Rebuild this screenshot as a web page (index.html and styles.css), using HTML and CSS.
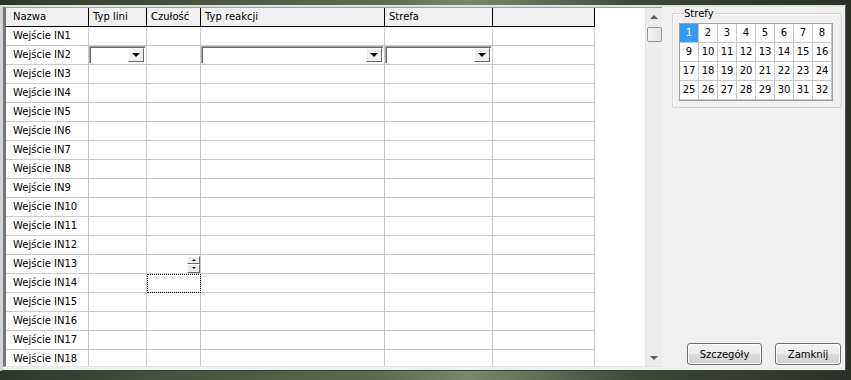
FILE: index.html
```html
<!DOCTYPE html>
<html lang="pl">

<head>
    <meta charset="UTF-8">
    <meta name="viewport" content="width=device-width, initial-scale=1.0">
    <title>Wejścia</title>
    <link rel="stylesheet" href="styles.css">
</head>

<body>
    <div class="window">
        <div class="grid-wrap">
            <div class="table-area">
                <div class="row head">
                    <div class="cell name">Nazwa</div>
                    <div class="cell">Typ lini</div>
                    <div class="cell">Czułość</div>
                    <div class="cell">Typ reakcji</div>
                    <div class="cell">Strefa</div>
                    <div class="cell"></div>
                </div>
                <div class="row"><div class="cell name">Wejście IN1</div><div class="cell"></div><div class="cell"></div><div class="cell"></div><div class="cell"></div><div class="cell"></div></div>
                <div class="row">
                    <div class="cell name">Wejście IN2</div>
                    <div class="cell edit"><div class="combo"><span class="combo-btn"><i class="tri-down"></i></span></div></div>
                    <div class="cell"></div>
                    <div class="cell edit"><div class="combo"><span class="combo-btn"><i class="tri-down"></i></span></div></div>
                    <div class="cell edit"><div class="combo"><span class="combo-btn"><i class="tri-down"></i></span></div></div>
                    <div class="cell"></div>
                </div>
                <div class="row"><div class="cell name">Wejście IN3</div><div class="cell"></div><div class="cell"></div><div class="cell"></div><div class="cell"></div><div class="cell"></div></div>
                <div class="row"><div class="cell name">Wejście IN4</div><div class="cell"></div><div class="cell"></div><div class="cell"></div><div class="cell"></div><div class="cell"></div></div>
                <div class="row"><div class="cell name">Wejście IN5</div><div class="cell"></div><div class="cell"></div><div class="cell"></div><div class="cell"></div><div class="cell"></div></div>
                <div class="row"><div class="cell name">Wejście IN6</div><div class="cell"></div><div class="cell"></div><div class="cell"></div><div class="cell"></div><div class="cell"></div></div>
                <div class="row"><div class="cell name">Wejście IN7</div><div class="cell"></div><div class="cell"></div><div class="cell"></div><div class="cell"></div><div class="cell"></div></div>
                <div class="row"><div class="cell name">Wejście IN8</div><div class="cell"></div><div class="cell"></div><div class="cell"></div><div class="cell"></div><div class="cell"></div></div>
                <div class="row"><div class="cell name">Wejście IN9</div><div class="cell"></div><div class="cell"></div><div class="cell"></div><div class="cell"></div><div class="cell"></div></div>
                <div class="row"><div class="cell name">Wejście IN10</div><div class="cell"></div><div class="cell"></div><div class="cell"></div><div class="cell"></div><div class="cell"></div></div>
                <div class="row"><div class="cell name">Wejście IN11</div><div class="cell"></div><div class="cell"></div><div class="cell"></div><div class="cell"></div><div class="cell"></div></div>
                <div class="row"><div class="cell name">Wejście IN12</div><div class="cell"></div><div class="cell"></div><div class="cell"></div><div class="cell"></div><div class="cell"></div></div>
                <div class="row">
                    <div class="cell name">Wejście IN13</div>
                    <div class="cell"></div>
                    <div class="cell spin-cell"><div class="spin"><span class="spin-btn"><i class="tri-up small"></i></span><span class="spin-btn"><i class="tri-down small"></i></span></div></div>
                    <div class="cell"></div><div class="cell"></div><div class="cell"></div>
                </div>
                <div class="row"><div class="cell name">Wejście IN14</div><div class="cell"></div><div class="cell focus"></div><div class="cell"></div><div class="cell"></div><div class="cell"></div></div>
                <div class="row"><div class="cell name">Wejście IN15</div><div class="cell"></div><div class="cell"></div><div class="cell"></div><div class="cell"></div><div class="cell"></div></div>
                <div class="row"><div class="cell name">Wejście IN16</div><div class="cell"></div><div class="cell"></div><div class="cell"></div><div class="cell"></div><div class="cell"></div></div>
                <div class="row"><div class="cell name">Wejście IN17</div><div class="cell"></div><div class="cell"></div><div class="cell"></div><div class="cell"></div><div class="cell"></div></div>
                <div class="row"><div class="cell name">Wejście IN18</div><div class="cell"></div><div class="cell"></div><div class="cell"></div><div class="cell"></div><div class="cell"></div></div>
            </div>
            <div class="vscroll">
                <span class="sb-btn"><i class="tri-up gray"></i></span>
                <span class="thumb"></span>
                <span class="sb-btn bottom"><i class="tri-down gray"></i></span>
            </div>
        </div>

        <aside class="side">
            <div class="group">
                <div class="group-title">Strefy</div>
                <div class="zones">
                    <span class="zone selected">1</span><span class="zone">2</span><span class="zone">3</span><span class="zone">4</span><span class="zone">5</span><span class="zone">6</span><span class="zone">7</span><span class="zone">8</span>
                    <span class="zone">9</span><span class="zone">10</span><span class="zone">11</span><span class="zone">12</span><span class="zone">13</span><span class="zone">14</span><span class="zone">15</span><span class="zone">16</span>
                    <span class="zone">17</span><span class="zone">18</span><span class="zone">19</span><span class="zone">20</span><span class="zone">21</span><span class="zone">22</span><span class="zone">23</span><span class="zone">24</span>
                    <span class="zone">25</span><span class="zone">26</span><span class="zone">27</span><span class="zone">28</span><span class="zone">29</span><span class="zone">30</span><span class="zone">31</span><span class="zone">32</span>
                </div>
            </div>
            <div class="actions">
                <button class="btn btn-details">Szczegóły</button>
                <button class="btn btn-close">Zamknij</button>
            </div>
        </aside>
    </div>
</body>

</html>
```

FILE: styles.css
```css
body {
    margin: 0;
    width: 851px;
    height: 380px;
    overflow: hidden;
    background: linear-gradient(90deg, #2c352a 0%, #46523f 20%, #5d6b53 45%, #7a8870 55%, #3d4838 75%, #2a3027 100%);
    font-family: "DejaVu Sans", sans-serif;
    font-size: 10px;
    color: #000;
}

.window {
    margin-top: 5px;
    width: 846px;
    height: 366px;
    box-sizing: border-box;
    border-top: 2px solid #dfe2de;
    border-left: 3px solid #d3d6d9;
    border-right: 1px solid #4f574c;
    border-bottom: 1px solid #3a4137;
    background: #f0f0f0;
    display: flex;
}

/* grid with inputs */
.grid-wrap {
    width: 659px;
    height: 360px;
    box-sizing: border-box;
    border-top: 1px solid #a0a0a0;
    border-left: 3px solid #777;
    border-bottom: 1px solid #e3e3e3;
    display: flex;
}

.table-area {
    width: 639px;
    height: 358px;
    background: #fff;
    overflow: hidden;
}

.row {
    display: grid;
    grid-template-columns: 83px 58px 54px 184px 108px 102px;
    height: 19px;
}

.cell {
    box-sizing: border-box;
    border-right: 1px solid #cacaca;
    border-bottom: 1px solid #cacaca;
    padding-left: 4px;
    line-height: 18px;
    white-space: nowrap;
    overflow: hidden;
}

.cell.name {
    padding-left: 7px;
}

.head .cell {
    background: #f0f0f0;
    border-right-color: #000;
    border-bottom-color: #000;
}

.cell.edit {
    padding: 0;
}

.combo {
    height: 100%;
    box-sizing: border-box;
    border: 1px solid;
    border-color: #a0a0a0 #fff #fff #a0a0a0;
    box-shadow: inset 1px 1px #696969;
    background: #fff;
    display: flex;
    justify-content: flex-end;
    padding: 1px;
}

.combo-btn {
    width: 16px;
    box-sizing: border-box;
    border: 1px solid;
    border-color: #fff #696969 #696969 #fff;
    background: #f0f0f0;
    display: flex;
    align-items: center;
    justify-content: center;
}

.tri-down, .tri-up {
    display: block;
    width: 0;
    height: 0;
    border-left: 4px solid transparent;
    border-right: 4px solid transparent;
}

.tri-down {
    border-top: 4px solid #000;
}

.tri-up {
    border-bottom: 4px solid #000;
}

.tri-down.small, .tri-up.small {
    border-left-width: 2px;
    border-right-width: 2px;
}

.tri-down.small {
    border-top-width: 2px;
}

.tri-up.small {
    border-bottom-width: 2px;
}

.tri-down.gray {
    border-top-color: #5c5c5c;
}

.tri-up.gray {
    border-bottom-color: #5c5c5c;
}

.spin-cell {
    display: flex;
    justify-content: flex-end;
    align-items: center;
    padding-right: 0;
}

.spin {
    width: 13px;
    height: 17px;
    display: flex;
    flex-direction: column;
}

.spin-btn {
    flex: 1;
    box-sizing: border-box;
    border: 1px solid;
    border-color: #fff #696969 #696969 #fff;
    background: #ececec;
    display: flex;
    align-items: center;
    justify-content: center;
}

.cell.focus {
    outline: 1px dotted #000;
    outline-offset: -1px;
}

/* scrollbar */
.vscroll {
    width: 17px;
    height: 358px;
    background: #ececec;
    border-left: 1px solid #e2e2e2;
    box-sizing: border-box;
    display: flex;
    flex-direction: column;
    align-items: center;
}

.sb-btn {
    height: 17px;
    width: 16px;
    display: flex;
    align-items: center;
    justify-content: center;
}

.sb-btn.bottom {
    margin-top: auto;
}

.thumb {
    margin-top: 2px;
    width: 15px;
    height: 15px;
    box-sizing: border-box;
    border: 1px solid #979797;
    border-radius: 2px;
    background: linear-gradient(90deg, #f3f3f3, #e4e4e4);
}

/* right panel */
.side {
    flex: 1;
    display: flex;
    flex-direction: column;
}

.group {
    margin: 6px 3px 0 10px;
    border: 1px solid #d3d3d3;
    border-radius: 2px;
    box-shadow: inset 1px 1px #fff;
    padding: 0 6px 6px 6px;
}

.group-title {
    width: max-content;
    margin: -7px 0 0 5px;
    padding-right: 1px;
    background: #f0f0f0;
    line-height: 13px;
}

.zones {
    margin-top: 3px;
    width: max-content;
    display: grid;
    grid-template-columns: repeat(8, 19px);
    border: 1px solid #a0a0a0;
    background: #fff;
}

.zone {
    height: 19px;
    box-sizing: border-box;
    border-right: 1px solid #c8c8c8;
    border-bottom: 1px solid #c8c8c8;
    text-align: center;
    line-height: 18px;
}

.zone.selected {
    background: #3399ff;
    color: #fff;
}

.actions {
    margin-top: auto;
    display: flex;
    justify-content: flex-end;
    gap: 13px;
    padding: 0 4px 5px 0;
}

.btn {
    height: 22px;
    padding: 0;
    border: 1px solid #707070;
    border-radius: 3px;
    background: linear-gradient(#f2f2f2 0%, #ebebeb 50%, #dddddd 50%, #cfcfcf 100%);
    box-shadow: inset 0 0 0 1px #fbfbfb;
    font-family: inherit;
    font-size: 10px;
    color: #000;
}

.btn-details {
    width: 75px;
}

.btn-close {
    width: 66px;
}
```
